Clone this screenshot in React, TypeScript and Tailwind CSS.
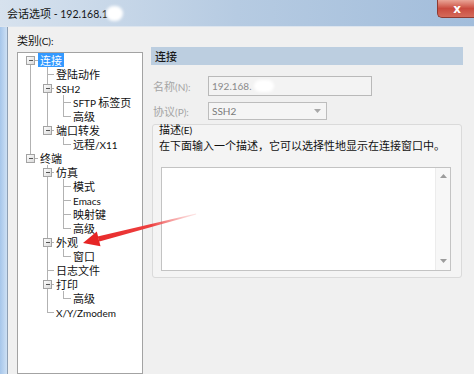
import React from "react";

type Item = { l: number; t: string; exp?: boolean; sel?: boolean };

const items: Item[] = [
  { l: 0, t: "连接", exp: true, sel: true },
  { l: 1, t: "登陆动作" },
  { l: 1, t: "SSH2", exp: true },
  { l: 2, t: "SFTP 标签页" },
  { l: 2, t: "高级" },
  { l: 1, t: "端口转发", exp: true },
  { l: 2, t: "远程/X11" },
  { l: 0, t: "终端", exp: true },
  { l: 1, t: "仿真", exp: true },
  { l: 2, t: "模式" },
  { l: 2, t: "Emacs" },
  { l: 2, t: "映射键" },
  { l: 2, t: "高级" },
  { l: 1, t: "外观", exp: true },
  { l: 2, t: "窗口" },
  { l: 1, t: "日志文件" },
  { l: 1, t: "打印", exp: true },
  { l: 2, t: "高级" },
  { l: 1, t: "X/Y/Zmodem" },
];

const LX = [12, 29, 45];
const LS = [20, 36, 53];
const cy = (i: number) => 7 + 14 * i;

// Render ASCII runs with a narrower Latin face, CJK with Noto Sans CJK
function Tx({ s, big }: { s: string; big?: boolean }) {
  const parts = s.split(/([\x00-\x7F]+)/).filter((p) => p.length > 0);
  return (
    <>
      {parts.map((p, i) =>
        /^[\x00-\x7F]+$/.test(p) ? (
          <span
            key={i}
            className={
              big
                ? "font-['Lato',sans-serif] text-[10.5px] whitespace-pre"
                : "font-['Lato',sans-serif] text-[10px] whitespace-pre"
            }
          >
            {p}
          </span>
        ) : (
          <span key={i}>{p}</span>
        )
      )}
    </>
  );
}

function TreeLines() {
  const lines: React.ReactNode[] = [];
  const roots = items.map((it, i) => (it.l === 0 ? i : -1)).filter((i) => i >= 0);
  lines.push(
    <line key="root" x1={LX[0] + 0.5} x2={LX[0] + 0.5} y1={cy(roots[0])} y2={cy(roots[roots.length - 1])} />
  );
  items.forEach((it, i) => {
    if (it.exp) {
      let last = -1;
      for (let j = i + 1; j < items.length; j++) {
        if (items[j].l <= it.l) break;
        if (items[j].l === it.l + 1) last = j;
      }
      if (last >= 0) {
        const x = LX[it.l + 1] + 0.5;
        lines.push(<line key={"v" + i} x1={x} x2={x} y1={cy(i) + 7} y2={cy(last)} />);
      }
    }
    lines.push(
      <line key={"h" + i} x1={LX[it.l]} x2={LS[it.l]} y1={cy(i) + 0.5} y2={cy(i) + 0.5} />
    );
  });
  return (
    <svg className="absolute left-0 top-0" width="124" height="300" viewBox="0 0 124 300">
      <defs>
        <linearGradient id="exg" x1="0" y1="0" x2="1" y2="1">
          <stop offset="0" stopColor="#ffffff" />
          <stop offset="1" stopColor="#d8d8d8" />
        </linearGradient>
      </defs>
      <g stroke="#b2b2b2" strokeWidth="1">{lines}</g>
      {items.map((it, i) =>
        it.exp ? (
          <g key={"e" + i}>
            <rect
              x={LX[it.l] - 3.5}
              y={cy(i) - 3.5}
              width="8"
              height="8"
              fill="url(#exg)"
              stroke="#a3a3a3"
            />
            <line x1={LX[it.l] - 1} x2={LX[it.l] + 3} y1={cy(i) + 0.5} y2={cy(i) + 0.5} stroke="#555" />
          </g>
        ) : null
      )}
    </svg>
  );
}

function Tree() {
  return (
    <div className="relative mt-[5px] w-[126px] h-[400px] border border-[#a3a3a3] bg-white">
      <TreeLines />
      <div className="relative flex flex-col">
        {items.map((it, i) => (
          <div key={i} className="h-[14px] flex items-center overflow-hidden">
            <span
              className={
                (it.l === 0 ? "ml-[20px] " : it.l === 1 ? "ml-[36px] " : "ml-[53px] ") +
                (it.sel
                  ? "inline-block h-[14px] bg-[#3399ff] text-white px-[2px] leading-[14px]"
                  : "inline-block h-[14px] px-[2px] leading-[14px] text-[#111]")
              }
            >
              <Tx s={it.t} />
            </span>
          </div>
        ))}
      </div>
    </div>
  );
}

export default function App() {
  return (
    <div className="relative w-[474px] h-[374px] overflow-hidden bg-[#f0f0f0] font-['Noto_Sans_CJK_SC',sans-serif] text-[11px] text-black">
      {/* Title bar */}
      <div className="flex h-[27px] bg-linear-to-r from-[#d7e2ee] via-[#b6cbe2] to-[#a2bddb] border-b border-[#dde5ee]">
        <div className="flex items-center pl-[7px] h-[26px] leading-[14px] text-[#151515]">
          <span>
            <Tx s="会话选项 - 192.168.1" big />
          </span>
          <span className="ml-[-2px] w-[17px] h-[15px] rounded-full bg-white blur-[1.5px]" />
        </div>
        <div className="flex-1" />
        <div className="w-[37px] h-[18px] rounded-bl-[5px] border-l border-b border-[#8d3a31] bg-linear-to-b from-[#e9a497] via-[#c94b3f] to-[#d56a5a] flex items-center justify-center">
          <span className="text-white font-bold text-[12px] leading-[12px] font-['DejaVu_Sans',sans-serif] ml-[2px]">x</span>
        </div>
      </div>

      {/* Body */}
      <div className="flex h-[347px]">
        <div className="w-[7px] bg-linear-to-r from-[#a6c6ea] to-[#cde0f4]" />
        <div className="w-[1px] bg-[#8e9fb3]" />
        <div className="flex-1 flex">
          {/* Left column */}
          <div className="w-[138px] pl-[9px] pt-[6px] flex flex-col">
            <div className="h-[14px] leading-[14px] text-[#111]">
              <Tx s="类别(C):" />
            </div>
            <Tree />
          </div>

          {/* Right column */}
          <div className="flex-1 pl-[5px] pt-[20px] flex flex-col">
            <div className="w-[312px] h-[18px] bg-[#bccee0] pl-[4px] leading-[18px] text-[#1a1a1a] font-medium">
              连接
            </div>

            <div className="mt-[11px] flex items-center h-[20px]">
              <div className="w-[57px] pl-[2px] text-[#a5a5a5]">
                <Tx s="名称(N):" />
              </div>
              <div className="w-[164px] h-[20px] border border-[#b9b9b9] bg-[#f3f3f3] flex items-center pl-[3px] text-[#8a8a8a]">
                <Tx s="192.168." />
                <span className="ml-[2px] w-[20px] h-[12px] rounded-full bg-white blur-[1.5px]" />
              </div>
            </div>

            <div className="mt-[6px] flex items-center h-[18px]">
              <div className="w-[57px] pl-[2px] text-[#a5a5a5]">
                <Tx s="协议(P):" />
              </div>
              <div className="w-[119px] h-[18px] border border-[#bdbdbd] bg-[#f5f5f5] flex items-center justify-between pl-[3px] pr-[5px] text-[#7a7a7a]">
                <Tx s="SSH2" />
                <svg width="7" height="4" viewBox="0 0 7 4">
                  <path d="M0 0 L7 0 L3.5 4 Z" fill="#a8a8a8" />
                </svg>
              </div>
            </div>

            <div className="mt-[4px] ml-[1px] w-[310px] h-[154px] border border-[#dadada] rounded-[3px] bg-[#f4f4f4] pl-[6px] flex flex-col">
              <div className="-mt-[3px] h-[14px] leading-[14px] text-[#111]">
                <Tx s="描述(E)" />
              </div>
              <div className="mt-[2px] h-[14px] leading-[14px] text-[#111]">
                在下面输入一个描述，它可以选择性地显示在连接窗口中。
              </div>
              <div className="mt-[15px] ml-[2px] w-[290px] h-[104px] border border-[#c3c3c3] bg-white flex justify-end">
                <div className="w-[15px] h-full bg-[#f7f7f7] border-l border-[#ececec] flex flex-col items-center justify-between pt-[6px] pb-[7px]">
                  <svg width="7" height="4" viewBox="0 0 7 4">
                    <path d="M0 4 L7 4 L3.5 0 Z" fill="#9c9c9c" />
                  </svg>
                  <svg width="7" height="4" viewBox="0 0 7 4">
                    <path d="M0 0 L7 0 L3.5 4 Z" fill="#9c9c9c" />
                  </svg>
                </div>
              </div>
            </div>
          </div>
        </div>
      </div>

      {/* Red annotation arrow */}
      <svg className="absolute left-0 top-0 pointer-events-none" width="474" height="374" viewBox="0 0 474 374">
        <defs>
          <linearGradient id="arrowg" x1="83" y1="243" x2="197" y2="214" gradientUnits="userSpaceOnUse">
            <stop offset="0" stopColor="#e62525" />
            <stop offset="0.6" stopColor="#ee4040" />
            <stop offset="1" stopColor="#f7b0b0" stopOpacity="0.3" />
          </linearGradient>
        </defs>
        <polygon points="83,243 100.5,246.3 96.8,231.6" fill="#e62525" />
        <polygon points="99.4,241.6 97.6,236.4 196,213.5 196.2,214.5" fill="url(#arrowg)" />
      </svg>
    </div>
  );
}
